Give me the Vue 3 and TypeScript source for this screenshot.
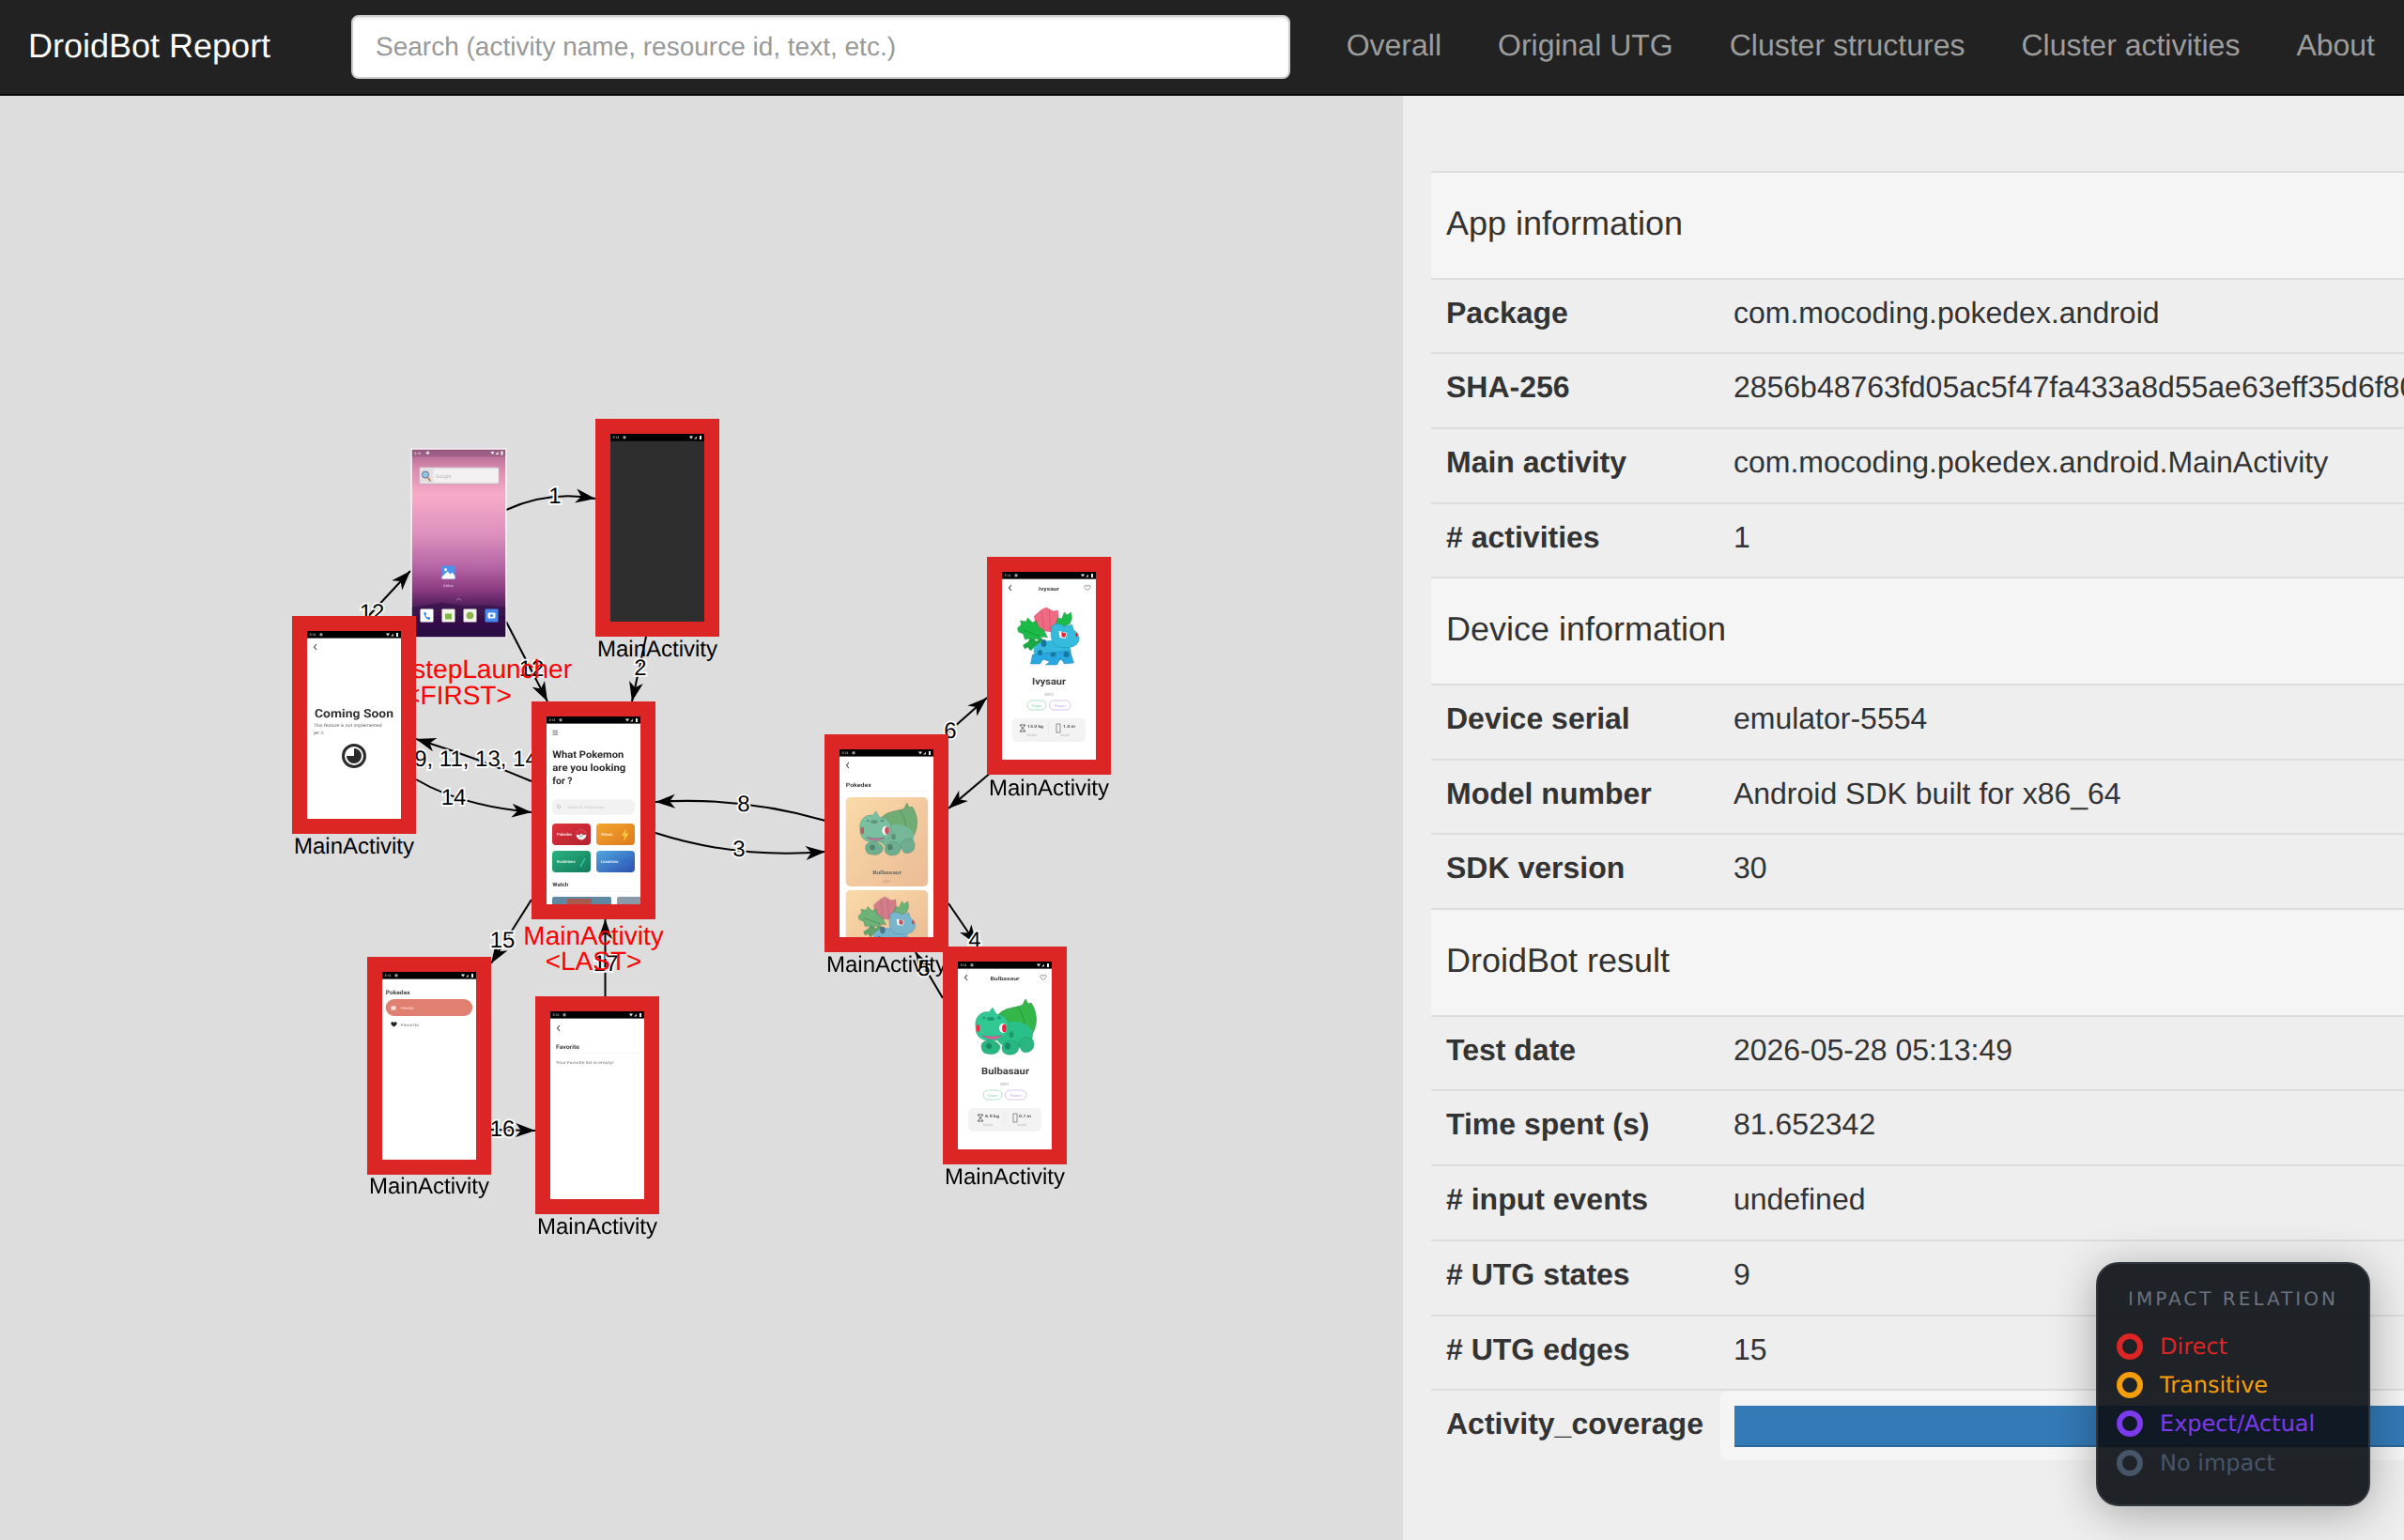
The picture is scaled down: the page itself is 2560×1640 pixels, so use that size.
<script setup lang="ts">
type Pt = [number, number]
interface Edge { d: string; tip: Pt; from: Pt; label: string; lx: number; ly: number }
interface Row { k: string; v: string }
interface Section { title: string; rows: Row[] }

const navLinks = ['Overall', 'Original UTG', 'Cluster structures', 'Cluster activities', 'About']

const sections: Section[] = [
  { title: 'App information', rows: [
    { k: 'Package', v: 'com.mocoding.pokedex.android' },
    { k: 'SHA-256', v: '2856b48763fd05ac5f47fa433a8d55ae63eff35d6f80' },
    { k: 'Main activity', v: 'com.mocoding.pokedex.android.MainActivity' },
    { k: '# activities', v: '1' },
  ] },
  { title: 'Device information', rows: [
    { k: 'Device serial', v: 'emulator-5554' },
    { k: 'Model number', v: 'Android SDK built for x86_64' },
    { k: 'SDK version', v: '30' },
  ] },
  { title: 'DroidBot result', rows: [
    { k: 'Test date', v: '2026-05-28 05:13:49' },
    { k: 'Time spent (s)', v: '81.652342' },
    { k: '# input events', v: 'undefined' },
    { k: '# UTG states', v: '9' },
    { k: '# UTG edges', v: '15' },
  ] },
]

const legend = [
  { name: 'Direct', cls: 'direct' },
  { name: 'Transitive', cls: 'transitive' },
  { name: 'Expect/Actual', cls: 'expect' },
  { name: 'No impact', cls: 'none' },
]

const edges: Edge[] = [
  { d: 'M539,543 Q585,522 634,531', from: [600, 526], tip: [634, 531], label: '1', lx: 591, ly: 527 },
  { d: 'M385,664 L437,608', from: [385, 664], tip: [437, 608], label: '12', lx: 396, ly: 651 },
  { d: 'M539,662 L583,747', from: [539, 662], tip: [583, 747], label: '12', lx: 566, ly: 711 },
  { d: 'M688,678 L673,747', from: [688, 678], tip: [673, 747], label: '2', lx: 682, ly: 710 },
  { d: 'M566,832 Q505,806 443,787', from: [505, 806], tip: [443, 787], label: '9, 11, 13, 14', lx: 507, ly: 807 },
  { d: 'M443,830 Q490,858 566,865', from: [510, 860], tip: [566, 865], label: '14', lx: 483, ly: 848 },
  { d: 'M879,874 Q790,848 698,854', from: [760, 852], tip: [698, 854], label: '8', lx: 792, ly: 855 },
  { d: 'M698,887 Q785,915 879,907', from: [820, 911], tip: [879, 907], label: '3', lx: 787, ly: 903 },
  { d: 'M1005,784 L1051,743', from: [1005, 784], tip: [1051, 743], label: '6', lx: 1012, ly: 777 },
  { d: 'M1056,822 L1010,861', from: [1056, 822], tip: [1010, 861], label: '', lx: 0, ly: 0 },
  { d: 'M1010,962 L1040,1006', from: [1010, 962], tip: [1040, 1006], label: '4', lx: 1038, ly: 1000 },
  { d: 'M1004,1063 L975,1014', from: [1004, 1063], tip: [975, 1014], label: '5', lx: 984, ly: 1030 },
  { d: 'M566,958 L523,1026', from: [566, 958], tip: [523, 1026], label: '15', lx: 535, ly: 1000 },
  { d: 'M523,1203 L570,1204', from: [523, 1203], tip: [570, 1204], label: '16', lx: 535, ly: 1201 },
  { d: 'M644.5,1061 L644.5,979', from: [644.5, 1061], tip: [644.5, 979], label: '17', lx: 645, ly: 1025 },
]

function head(e: Edge): string {
  const [tx, ty] = e.tip
  const [fx, fy] = e.from
  const len = Math.hypot(tx - fx, ty - fy) || 1
  const ux = (tx - fx) / len
  const uy = (ty - fy) / len
  const L = 21
  const W = 7.5
  const pt = (a: number, b: number) => `${(tx - ux * a - uy * b).toFixed(1)},${(ty - uy * a + ux * b).toFixed(1)}`
  return [pt(0, 0), pt(L, W), pt(L * 0.72, 0), pt(L, -W)].join(' ')
}

interface Chip { t: string; x: number; w: number; c: string }
const chips: Chip[] = [
  { t: 'Grass', x: 27, w: 20, c: '#7fd0a6' },
  { t: 'Poison', x: 50.5, w: 22.5, c: '#c49ade' },
]
</script>

<template>
  <div class="page">
    <nav class="navbar">
      <a class="brand">DroidBot Report</a>
      <input class="search" type="text" placeholder="Search (activity name, resource id, text, etc.)" />
      <ul class="links">
        <li v-for="l in navLinks" :key="l">{{ l }}</li>
      </ul>
    </nav>

    <main class="main">
      <section class="graph">
        <svg class="canvas" width="1494" height="1538" viewBox="0 102 1494 1538">
          <defs>
            <filter id="soft" x="-5%" y="-5%" width="110%" height="110%">
              <feGaussianBlur stdDeviation="0.45" />
            </filter>
            <filter id="dull" x="-5%" y="-5%" width="110%" height="110%">
              <feColorMatrix type="saturate" values="0.6" />
            </filter>
            <linearGradient id="wall" x1="0" y1="0" x2="0" y2="1">
              <stop offset="0" stop-color="#a96390" />
              <stop offset="0.1" stop-color="#d888ac" />
              <stop offset="0.24" stop-color="#f8abc8" />
              <stop offset="0.45" stop-color="#dd90bd" />
              <stop offset="0.63" stop-color="#b564a4" />
              <stop offset="0.75" stop-color="#8a3a80" />
              <stop offset="0.83" stop-color="#55205f" />
              <stop offset="1" stop-color="#260a3e" />
            </linearGradient>
            <linearGradient id="card" x1="0" y1="0" x2="1" y2="1">
              <stop offset="0" stop-color="#fadaa8" />
              <stop offset="1" stop-color="#ebbb95" />
            </linearGradient>
            <linearGradient id="bR" x1="0" y1="0" x2="1" y2="1">
              <stop offset="0" stop-color="#e0323c" />
              <stop offset="1" stop-color="#b0242e" />
            </linearGradient>
            <linearGradient id="bO" x1="0" y1="0" x2="1" y2="1">
              <stop offset="0" stop-color="#f2a52e" />
              <stop offset="1" stop-color="#de7a1e" />
            </linearGradient>
            <linearGradient id="bG" x1="0" y1="0" x2="1" y2="1">
              <stop offset="0" stop-color="#2bb381" />
              <stop offset="1" stop-color="#13795b" />
            </linearGradient>
            <linearGradient id="bB" x1="0" y1="0" x2="1" y2="1">
              <stop offset="0" stop-color="#50a8e0" />
              <stop offset="1" stop-color="#2c4fb0" />
            </linearGradient>

            <symbol id="bulba" viewBox="0 0 67 60" overflow="visible">
              <path d="M24,20 C30,8 44,10 52,6 L55,0 L58,5 L61,4 C68,14 69,30 60,40 C50,44 34,38 30,28 Z" fill="#34b648" stroke="#1f7f38" stroke-width=".5" />
              <path d="M46,8 C54,16 56,30 52,40" fill="none" stroke="#1f9a3a" stroke-width="1" />
              <ellipse cx="43" cy="38" rx="20" ry="14" fill="#2cc08a" />
              <path d="M2,30 C0,18 10,12 16,14 L20,9 L24,16 C34,16 38,24 37,32 C36,42 24,46 14,44 C6,43 2,38 2,30 Z" fill="#30c893" stroke="#1f8f6a" stroke-width=".4" />
              <path d="M8,50 C8,42 24,42 28,50 C28,58 20,60 14,58 C10,58 8,54 8,50 Z M30,52 C30,44 44,40 48,50 C48,58 42,60 36,59 C32,58 30,56 30,52 Z M48,46 C52,38 64,38 64,48 C64,56 56,58 52,56 C50,54 48,50 48,46 Z" fill="#29b681" stroke="#1d8a62" stroke-width=".4" />
              <ellipse cx="4.5" cy="31" rx="1.8" ry="4" fill="#ef2e45" />
              <ellipse cx="31" cy="31" rx="4" ry="5" fill="#fff" />
              <ellipse cx="32.5" cy="31" rx="2.4" ry="4.2" fill="#ef2040" />
              <path d="M9,39 Q20,46 30,39 Q20,41 9,39 Z" fill="#f060a0" stroke="#b03070" stroke-width=".4" />
              <ellipse cx="18" cy="21" rx="4" ry="2" fill="#1c9a70" />
              <ellipse cx="27" cy="20" rx="2" ry="1.4" fill="#1c9a70" />
              <ellipse cx="11" cy="20" rx="1.6" ry="1.2" fill="#1c9a70" />
              <ellipse cx="40" cy="38" rx="2.5" ry="3.5" fill="#1c9a70" />
              <ellipse cx="36" cy="50" rx="3" ry="3.5" fill="#178a62" />
              <ellipse cx="16" cy="50" rx="3" ry="3" fill="#178a62" />
            </symbol>

            <symbol id="ivy" viewBox="0 0 67 62" overflow="visible">
              <path d="M20,24 L18,9 L26,2 L31,0 L38,4 L43,3 L44,16 L38,26 Z" fill="#ef6a82" stroke="#b8405a" stroke-width=".4" />
              <path d="M26,4 L28,22 M34,3 L35,24" stroke="#d04a66" stroke-width=".6" fill="none" />
              <path d="M40,20 L43,11 L47,12 L50,5 L53,8 L57,5 L58,11 L56,17 L50,20 L46,24 Z" fill="#1fbb4a" stroke="#0c7d2c" stroke-width=".4" />
              <path d="M0,22 L4,18 L3,14 L9,15 L11,11 L16,16 L20,14 L22,20 L28,24 L32,32 L24,30 L27,36 L19,33 L17,38 L12,33 L8,34 L6,28 L1,26 Z" fill="#1fbb4a" stroke="#0c7d2c" stroke-width=".4" />
              <path d="M6,40 L11,37 L14,33 L20,36 L26,33 L24,40 L18,42 L14,46 L11,42 L8,44 Z" fill="#1aa944" stroke="#0c7d2c" stroke-width=".4" />
              <path d="M6,24 L28,32" stroke="#0c8d34" stroke-width=".7" fill="none" />
              <ellipse cx="37" cy="46" rx="20" ry="11" fill="#35b8dd" />
              <path d="M16,50 L14,60 L24,60 L28,54 L34,58 L30,61 L42,61 L46,54 L50,60 L60,59 L56,46 Z" fill="#2aa8e0" stroke="#1a6fa8" stroke-width=".4" />
              <path d="M36,24 C36,16 44,16 50,20 L58,18 L60,24 C66,28 67,34 64,38 C60,44 46,44 40,40 C36,36 35,30 36,24 Z" fill="#36bcdc" stroke="#1a7fa8" stroke-width=".4" />
              <path d="M44,25 L53,27 L51,33 L45,32 Z" fill="#fff" />
              <path d="M47,26 L52,27.5 L50.5,32 L47,31 Z" fill="#e82038" />
              <ellipse cx="63" cy="29" rx="1.2" ry="2" fill="#e82038" />
              <ellipse cx="28" cy="38" rx="3" ry="4" fill="#1877a0" />
              <ellipse cx="24" cy="48" rx="2.5" ry="3" fill="#1877a0" />
              <ellipse cx="38" cy="50" rx="3" ry="2.5" fill="#1877a0" />
              <ellipse cx="52" cy="50" rx="3" ry="3" fill="#1877a0" />
            </symbol>

            <g id="sbar">
              <rect width="100" height="7.6" fill="#000" />
              <text x="2.4" y="5.4" class="t" font-size="3.6" fill="#ddd">5:14</text>
              <circle cx="15" cy="3.8" r="1.7" fill="#999" />
              <path d="M84,2.6 L88,2.6 L86,5.4 Z" fill="#eee" />
              <path d="M89,5.6 L92,5.6 L92,2.6 Z" fill="#bbb" />
              <rect x="95" y="2" width="2" height="4" fill="#eee" />
            </g>
            <path id="chev" d="M10,-3 L7.5,0 L10,3" fill="none" stroke="#444" stroke-width="1.1" />
            <path id="hrt" d="M0,1.2 C-.2,-.8 -3.2,-.8 -3.2,1.4 C-3.2,3 -1.2,4 0,5 C1.2,4 3.2,3 3.2,1.4 C3.2,-.8 .2,-.8 0,1.2 Z" />
          </defs>

          <!-- edges, drawn beneath the nodes -->
          <g v-for="(e, i) in edges" :key="i">
            <path :d="e.d" class="edge" />
            <polygon :points="head(e)" class="arrow" />
            <text v-if="e.label" :x="e.lx" :y="e.ly + 8.5" class="edge-label">{{ e.label }}</text>
          </g>

          <!-- launcher -->
          <rect x="437.5" y="477.5" width="102" height="202" fill="#fff" />
          <svg x="438.5" y="478.5" width="100" height="200" viewBox="0 0 100 200">
            <g filter="url(#soft)">
              <rect width="100" height="200" fill="url(#wall)" />
              <rect width="100" height="8" fill="#000" opacity=".12" />
              <text x="2.5" y="5.4" class="t" font-size="3.6" fill="#eee">5:14</text>
              <circle cx="17" cy="3.8" r="1.7" fill="#ddd" />
              <path d="M84,2.6 L88,2.6 L86,5.4 Z M89,5.6 L92,5.6 L92,2.6 Z" fill="#fff" />
              <rect x="95" y="2" width="2" height="4" fill="#fff" />
              <rect x="8" y="19" width="85" height="18" rx="2" fill="#e4dfe2" stroke="#bb9cb0" stroke-width=".6" />
              <rect x="23" y="21" width="69" height="14" rx="1.5" fill="#f4f1f2" />
              <circle cx="14.5" cy="27" r="3.6" fill="#8fc4e8" stroke="#667" stroke-width=".9" />
              <path d="M17,30 L20,34" stroke="#b08040" stroke-width="1.5" />
              <text x="25" y="30" class="t" font-size="5.4" fill="#bbb">Google</text>
              <rect x="32" y="124" width="14" height="14" fill="#4b91ee" />
              <circle cx="36" cy="128" r="1.5" fill="#fff" />
              <path d="M32,136 L38,130 L41,133 L43,131 L46,135 L46,138 L32,138 Z" fill="#fff" />
              <text x="39" y="146.5" class="t" font-size="3.6" fill="#e4d0e4" text-anchor="middle">Gallery</text>
              <path d="M47.5,161 L50,158.5 L52.5,161" fill="none" stroke="#d8b8d8" stroke-width=".6" />
              <path d="M0,168 L18,166 L32,163 L44,165 L58,167 L74,166 L100,168 L100,200 L0,200 Z" fill="#2c0c44" opacity=".55" />
              <rect x="9" y="170" width="14" height="14" rx="1" fill="#fff" />
              <path d="M13,173.5 C13,178 15.5,181 19.5,181.5 L19.5,179 L17,178.5 L16.5,179 C15.5,178.5 15,177.5 14.5,176.5 L15.5,176 L15,173.5 Z" fill="#2a80e0" />
              <rect x="32" y="170" width="14" height="14" rx="1" fill="#f4f4ea" />
              <rect x="35.5" y="175" width="7" height="6" fill="#7cb648" />
              <rect x="55" y="170" width="14" height="14" rx="1" fill="#f4f4ea" />
              <circle cx="62" cy="177" r="3.8" fill="#7cb648" />
              <circle cx="62" cy="177" r="1.5" fill="#d0a040" />
              <rect x="78" y="170" width="14" height="14" rx="1" fill="#4488ee" />
              <rect x="81" y="174" width="8" height="6" rx="1" fill="#fff" />
              <circle cx="85" cy="177" r="1.6" fill="#4488ee" />
            </g>
          </svg>
          <text x="609" y="722" class="label red" text-anchor="end">QuickstepLauncher</text>
          <text x="488" y="750" class="label red" text-anchor="middle">&lt;FIRST&gt;</text>

          <!-- black screen -->
          <rect x="634" y="446" width="132" height="232" class="frame" />
          <svg x="650" y="462" width="100" height="200" viewBox="0 0 100 200">
            <g filter="url(#soft)">
              <rect width="100" height="200" fill="#2d2d2d" />
              <use href="#sbar" />
            </g>
          </svg>
          <text x="700" y="699" class="label" text-anchor="middle">MainActivity</text>

          <!-- coming soon -->
          <rect x="311" y="656" width="132" height="232" class="frame" />
          <svg x="327" y="672" width="100" height="200" viewBox="0 0 100 200">
            <g filter="url(#soft)">
              <rect width="100" height="200" fill="#fff" />
              <use href="#sbar" />
              <use href="#chev" y="17" />
              <text x="50" y="92" class="b" font-size="12.5" fill="#333" text-anchor="middle" textLength="84" lengthAdjust="spacingAndGlyphs">Coming Soon</text>
              <text x="6.7" y="102" class="t" font-size="4.6" fill="#666" textLength="73" lengthAdjust="spacingAndGlyphs">This feature is not implemented</text>
              <text x="6.7" y="109.5" class="t" font-size="4.6" fill="#666">yet :3</text>
              <circle cx="50" cy="133" r="11.5" fill="#fff" stroke="#2b2b2b" stroke-width="3" />
              <path d="M50,125 A8,8 0 1 1 42,133 L50,133 Z" fill="#2b2b2b" />
            </g>
          </svg>
          <text x="377" y="909" class="label" text-anchor="middle">MainActivity</text>

          <!-- home -->
          <rect x="566" y="747" width="132" height="232" class="frame" />
          <svg x="582" y="763" width="100" height="200" viewBox="0 0 100 200">
            <g filter="url(#soft)">
              <rect width="100" height="200" fill="#fff" />
              <use href="#sbar" />
              <path d="M6.5,15.3 H12 M6.5,17.3 H12 M6.5,19.3 H12" stroke="#555" stroke-width=".8" />
              <text x="6.3" y="44" class="b" font-size="10.4" fill="#2b2b2b" textLength="76" lengthAdjust="spacingAndGlyphs">What Pokemon</text>
              <text x="6.3" y="58" class="b" font-size="10.4" fill="#2b2b2b" textLength="78" lengthAdjust="spacingAndGlyphs">are you looking</text>
              <text x="6.3" y="72" class="b" font-size="10.4" fill="#2b2b2b">for ?</text>
              <rect x="6" y="88" width="88" height="17" rx="6" fill="#f2f2f2" />
              <circle cx="13" cy="96" r="1.7" fill="none" stroke="#aaa" stroke-width=".6" />
              <text x="22.5" y="98" class="t" font-size="4.4" fill="#ccc" textLength="39" lengthAdjust="spacingAndGlyphs">Search Pokemon</text>
              <rect x="6" y="114" width="41" height="23" rx="4" fill="url(#bR)" />
              <text x="11" y="127" class="b" font-size="4.2" fill="#f5dada">Pokedex</text>
              <circle cx="37" cy="126" r="5.4" fill="#f0f0f0" />
              <path d="M31.6,126 A5.4,5.4 0 0 1 42.4,126 Z" fill="#d8283c" />
              <circle cx="37" cy="126" r="1.6" fill="#fff" stroke="#444" stroke-width=".5" />
              <rect x="53" y="114" width="41" height="23" rx="4" fill="url(#bO)" />
              <text x="58" y="127" class="b" font-size="4.2" fill="#fbe6c6">Moves</text>
              <path d="M85,119 L80,127 L83.5,127 L81.5,134 L87.5,124.5 L84,124.5 Z" fill="#f6cc3c" />
              <rect x="6" y="143" width="41" height="23" rx="4" fill="url(#bG)" />
              <text x="11" y="156" class="b" font-size="4.2" fill="#d8f2e8">Evolutions</text>
              <path d="M36,160 L41,151" stroke="#30c0a0" stroke-width="1.6" />
              <rect x="53" y="143" width="41" height="23" rx="4" fill="url(#bB)" />
              <text x="58" y="156" class="b" font-size="4.2" fill="#dceaf8">Locations</text>
              <path d="M84,160 C81,155 81,151 84,150 C87,151 87,155 84,160 Z" fill="#3070d0" />
              <text x="6.3" y="181" class="b" font-size="6" fill="#3a3a3a">Watch</text>
              <rect x="6" y="186" width="88" height=".5" fill="#eee" />
              <rect x="6" y="192" width="63" height="10" rx="2" fill="#5f88a2" />
              <rect x="22" y="194" width="26" height="8" fill="#a85a50" />
              <rect x="75" y="192" width="27" height="10" rx="2" fill="#8a9aa8" />
            </g>
          </svg>
          <text x="632" y="1006" class="label red" text-anchor="middle">MainActivity</text>
          <text x="632" y="1033" class="label red" text-anchor="middle">&lt;LAST&gt;</text>

          <!-- list -->
          <rect x="878" y="782" width="132" height="232" class="frame" />
          <svg x="894" y="798" width="100" height="200" viewBox="0 0 100 200">
            <g filter="url(#soft)">
              <rect width="100" height="200" fill="#fff" />
              <use href="#sbar" />
              <use href="#chev" y="17" />
              <text x="6.7" y="40" class="b" font-size="6" fill="#444" textLength="27" lengthAdjust="spacingAndGlyphs">Pokedex</text>
              <rect x="6.7" y="44" width="87" height=".5" fill="#eee" />
              <rect x="6.7" y="51" width="87.5" height="95" rx="5" fill="url(#card)" />
              <g filter="url(#dull)"><use href="#bulba" x="20" y="57" width="63" height="57" /></g>
              <text x="50.7" y="133" class="b" font-size="5.8" fill="#6e6a60" text-anchor="middle" textLength="31" lengthAdjust="spacingAndGlyphs">Bulbasaur</text>
              <text x="50.7" y="142" class="t" font-size="4" fill="#c09a80" text-anchor="middle">#001</text>
              <rect x="6.7" y="150" width="87.5" height="60" rx="5" fill="url(#card)" />
              <g filter="url(#dull)"><use href="#ivy" x="20" y="157" width="62" height="58" /></g>
            </g>
          </svg>
          <text x="944" y="1035" class="label" text-anchor="middle">MainActivity</text>

          <!-- ivysaur -->
          <rect x="1051" y="593" width="132" height="232" class="frame" />
          <svg x="1067" y="609" width="100" height="200" viewBox="0 0 100 200">
            <g filter="url(#soft)">
              <rect width="100" height="200" fill="#fff" />
              <use href="#sbar" />
              <use href="#chev" y="17" />
              <text x="50" y="19.7" class="b" font-size="5.6" fill="#444" text-anchor="middle" textLength="22" lengthAdjust="spacingAndGlyphs">Ivysaur</text>
              <use href="#hrt" x="91" y="14.5" fill="none" stroke="#555" stroke-width=".6" />
              <use href="#ivy" x="16.5" y="38" width="67" height="62" />
              <text x="50" y="120" class="b" font-size="10" fill="#3a3a3a" text-anchor="middle" textLength="36" lengthAdjust="spacingAndGlyphs">Ivysaur</text>
              <text x="50" y="132" class="t" font-size="4.4" fill="#aaa" text-anchor="middle">#002</text>
              <g v-for="c in chips" :key="c.t">
                <rect :x="c.x" y="137" :width="c.w" height="10" rx="5" fill="#fff" :stroke="c.c" stroke-width=".6" />
                <text :x="c.x + c.w / 2" y="143.6" class="t" font-size="3.8" :fill="c.c" text-anchor="middle">{{ c.t }}</text>
              </g>
              <rect x="10.7" y="156" width="78.5" height="25" rx="5" fill="#f3f3f3" />
              <path d="M19,163 H25 L19,170 H25 Z" fill="none" stroke="#555" stroke-width=".9" />
              <text x="27" y="166" class="b" font-size="4.4" fill="#555" textLength="17" lengthAdjust="spacingAndGlyphs">13.0 kg</text>
              <text x="32" y="174.5" class="t" font-size="3.6" fill="#bbb" text-anchor="middle">Weight</text>
              <rect x="49" y="161" width=".5" height="11" fill="#ddd" />
              <rect x="58" y="162" width="4" height="9" fill="none" stroke="#777" stroke-width=".8" />
              <text x="65" y="166" class="b" font-size="4.4" fill="#555" textLength="13" lengthAdjust="spacingAndGlyphs">1.0 m</text>
              <text x="67" y="174.5" class="t" font-size="3.6" fill="#bbb" text-anchor="middle">Height</text>
            </g>
          </svg>
          <text x="1117" y="847" class="label" text-anchor="middle">MainActivity</text>

          <!-- bulbasaur -->
          <rect x="1004" y="1008" width="132" height="232" class="frame" />
          <svg x="1020" y="1024" width="100" height="200" viewBox="0 0 100 200">
            <g filter="url(#soft)">
              <rect width="100" height="200" fill="#fff" />
              <use href="#sbar" />
              <use href="#chev" y="17" />
              <text x="50" y="19.7" class="b" font-size="5.8" fill="#444" text-anchor="middle" textLength="31" lengthAdjust="spacingAndGlyphs">Bulbasaur</text>
              <use href="#hrt" x="91" y="14.5" fill="none" stroke="#555" stroke-width=".6" />
              <use href="#bulba" x="17" y="40" width="67" height="60" />
              <text x="50.5" y="120" class="b" font-size="10" fill="#3a3a3a" text-anchor="middle" textLength="51" lengthAdjust="spacingAndGlyphs">Bulbasaur</text>
              <text x="50" y="132" class="t" font-size="4.4" fill="#aaa" text-anchor="middle">#001</text>
              <g v-for="c in chips" :key="c.t">
                <rect :x="c.x" y="137" :width="c.w" height="10" rx="5" fill="#fff" :stroke="c.c" stroke-width=".6" />
                <text :x="c.x + c.w / 2" y="143.6" class="t" font-size="3.8" :fill="c.c" text-anchor="middle">{{ c.t }}</text>
              </g>
              <rect x="11" y="156" width="78" height="25" rx="5" fill="#f3f3f3" />
              <path d="M21,163 H27 L21,170 H27 Z" fill="none" stroke="#555" stroke-width=".9" />
              <text x="29" y="166" class="b" font-size="4.4" fill="#555" textLength="15" lengthAdjust="spacingAndGlyphs">6.9 kg</text>
              <text x="32" y="174.5" class="t" font-size="3.6" fill="#bbb" text-anchor="middle">Weight</text>
              <rect x="49.5" y="161" width=".5" height="11" fill="#ddd" />
              <rect x="59" y="162" width="4" height="9" fill="none" stroke="#777" stroke-width=".8" />
              <text x="65" y="166" class="b" font-size="4.4" fill="#555" textLength="13" lengthAdjust="spacingAndGlyphs">0.7 m</text>
              <text x="68" y="174.5" class="t" font-size="3.6" fill="#bbb" text-anchor="middle">Height</text>
            </g>
          </svg>
          <text x="1070" y="1261" class="label" text-anchor="middle">MainActivity</text>

          <!-- drawer -->
          <rect x="391" y="1019" width="132" height="232" class="frame" />
          <svg x="407" y="1035" width="100" height="200" viewBox="0 0 100 200">
            <g filter="url(#soft)">
              <rect width="100" height="200" fill="#fff" />
              <use href="#sbar" />
              <text x="3.7" y="24" class="b" font-size="6.2" fill="#444" textLength="26" lengthAdjust="spacingAndGlyphs">Pokedex</text>
              <rect x="3.7" y="29" width="92.5" height="18" rx="9" fill="#e0806f" />
              <rect x="9.5" y="36.5" width="5" height="4" fill="#fbe4df" />
              <text x="20" y="39.8" class="t" font-size="4.4" fill="#fbe4df" textLength="14" lengthAdjust="spacingAndGlyphs">Home</text>
              <use href="#hrt" x="12.5" y="53.5" fill="#222" />
              <text x="20" y="57.5" class="t" font-size="4.4" fill="#777" textLength="19" lengthAdjust="spacingAndGlyphs">Favorite</text>
            </g>
          </svg>
          <text x="457" y="1271" class="label" text-anchor="middle">MainActivity</text>

          <!-- favourite -->
          <rect x="570" y="1061" width="132" height="232" class="frame" />
          <svg x="586" y="1077" width="100" height="200" viewBox="0 0 100 200">
            <g filter="url(#soft)">
              <rect width="100" height="200" fill="#fff" />
              <use href="#sbar" />
              <use href="#chev" y="18" />
              <text x="6" y="40" class="b" font-size="6.4" fill="#444" textLength="25" lengthAdjust="spacingAndGlyphs">Favorite</text>
              <rect x="6" y="44" width="88" height=".5" fill="#eee" />
              <text x="6" y="56" class="t" font-size="4.2" fill="#777" textLength="61" lengthAdjust="spacingAndGlyphs">Your Favorite list is empty!</text>
            </g>
          </svg>
          <text x="636" y="1314" class="label" text-anchor="middle">MainActivity</text>
        </svg>
      </section>

      <section class="info">
        <table class="table">
          <tbody>
            <template v-for="s in sections" :key="s.title">
              <tr class="head">
                <td colspan="2"><h3>{{ s.title }}</h3></td>
              </tr>
              <tr v-for="r in s.rows" :key="r.k">
                <th>{{ r.k }}</th>
                <td>{{ r.v }}</td>
              </tr>
            </template>
            <tr>
              <th>Activity_coverage</th>
              <td class="cov">
                <div class="progress"><div class="bar"></div></div>
              </td>
            </tr>
          </tbody>
        </table>
      </section>
    </main>

    <aside class="legend">
      <div class="legend-title">IMPACT RELATION</div>
      <div v-for="l in legend" :key="l.name" class="legend-row" :class="l.cls">
        <span class="ring"></span>
        <span>{{ l.name }}</span>
      </div>
    </aside>
  </div>
</template>

<style>
html, body { margin: 0; padding: 0; overflow: hidden; background: #eee; }
</style>

<style scoped>
.page {
  position: relative;
  width: 2560px;
  height: 1640px;
  overflow: hidden;
  font-family: "Liberation Sans", Arial, sans-serif;
  color: #333;
  text-rendering: geometricPrecision;
}
.navbar {
  display: flex;
  align-items: center;
  height: 100px;
  background: #222;
  border-bottom: 2px solid #080808;
}
.brand {
  width: 374px;
  padding-left: 30px;
  box-sizing: border-box;
  font-size: 36px;
  color: #fff;
  position: relative;
  top: -1px;
}
.search {
  width: 1000px;
  height: 68px;
  box-sizing: border-box;
  padding: 0 24px;
  border: 2px solid #ccc;
  border-radius: 8px;
  background: #fff;
  box-shadow: inset 0 2px 2px rgba(0, 0, 0, 0.075);
  font: 28px "Liberation Sans", Arial, sans-serif;
  text-rendering: geometricPrecision;
  outline: none;
}
.search::placeholder { color: #999; opacity: 1; }
.links {
  display: flex;
  gap: 60px;
  margin: -3px 31px 0 auto;
  padding: 0;
  list-style: none;
  font-size: 32px;
  color: #9d9d9d;
}
.main { display: flex; height: 1538px; }
.graph { width: 1494px; flex: none; background: #ddd; overflow: hidden; }
.canvas { display: block; }
.edge { fill: none; stroke: #000; stroke-width: 2; }
.arrow { fill: #000; }
.edge-label {
  font: 24px "Liberation Sans", Arial, sans-serif;
  text-anchor: middle;
  fill: #000;
  stroke: #fff;
  stroke-width: 3.5px;
  paint-order: stroke;
}
.label { font: 24px "Liberation Sans", Arial, sans-serif; fill: #000; }
.label.red { font-size: 28px; fill: #f00; }
.frame { fill: #dc2626; }
.t { font-family: Roboto, sans-serif; }
.b { font-family: Roboto, sans-serif; font-weight: 700; }
.info { flex: 1; min-width: 0; background: #eee; overflow: hidden; padding: 80px 0 0 30px; box-sizing: border-box; }
.table {
  border-collapse: separate;
  border-spacing: 0;
  font-size: 32px;
  line-height: 45.71px;
  width: 1500px;
  white-space: nowrap;
}
.table th, .table td {
  border-top: 2px solid #ddd;
  padding: 13px 16px 19px;
  text-align: left;
  vertical-align: top;
}
.table th { width: 272.5px; font-weight: 700; }
.head td { background: #f5f5f5; }
.head h3 { margin: 20.5px 0 19.5px; font-size: 36px; font-weight: 500; line-height: 39.6px; }
.table .cov { padding: 0; }
.progress {
  height: 44px;
  margin-left: 2px;
  padding: 16px 16px 14px 15.5px;
  background: #f5f5f5;
  border-radius: 8px;
}
.bar {
  height: 44px;
  background: #337ab7;
  box-shadow: inset 0 -2px 0 rgba(0, 0, 0, 0.15);
  width: 1064px;
}
.legend {
  position: absolute;
  left: 2232px;
  top: 1344px;
  width: 292px;
  height: 260px;
  box-sizing: border-box;
  padding: 23px 20px 0;
  background: rgba(13, 17, 23, 0.92);
  border: 2px solid #30363d;
  border-radius: 24px;
  box-shadow: 0 8px 48px rgba(0, 0, 0, 0.3);
  font-family: "DejaVu Sans", sans-serif;
  font-size: 24px;
}
.legend-title {
  font-size: 20px;
  line-height: 28px;
  letter-spacing: 3px;
  color: #6b7280;
  text-align: center;
  margin-bottom: 16px;
}
.legend-row { display: flex; align-items: center; gap: 18px; height: 41.4px; }
.ring {
  width: 28px;
  height: 28px;
  box-sizing: border-box;
  border: 6px solid currentColor;
  border-radius: 50%;
  flex: none;
}
.direct { color: #dc2626; }
.transitive { color: #f59e0b; }
.expect { color: #7c3aed; }
.none { color: #475569; }
</style>
